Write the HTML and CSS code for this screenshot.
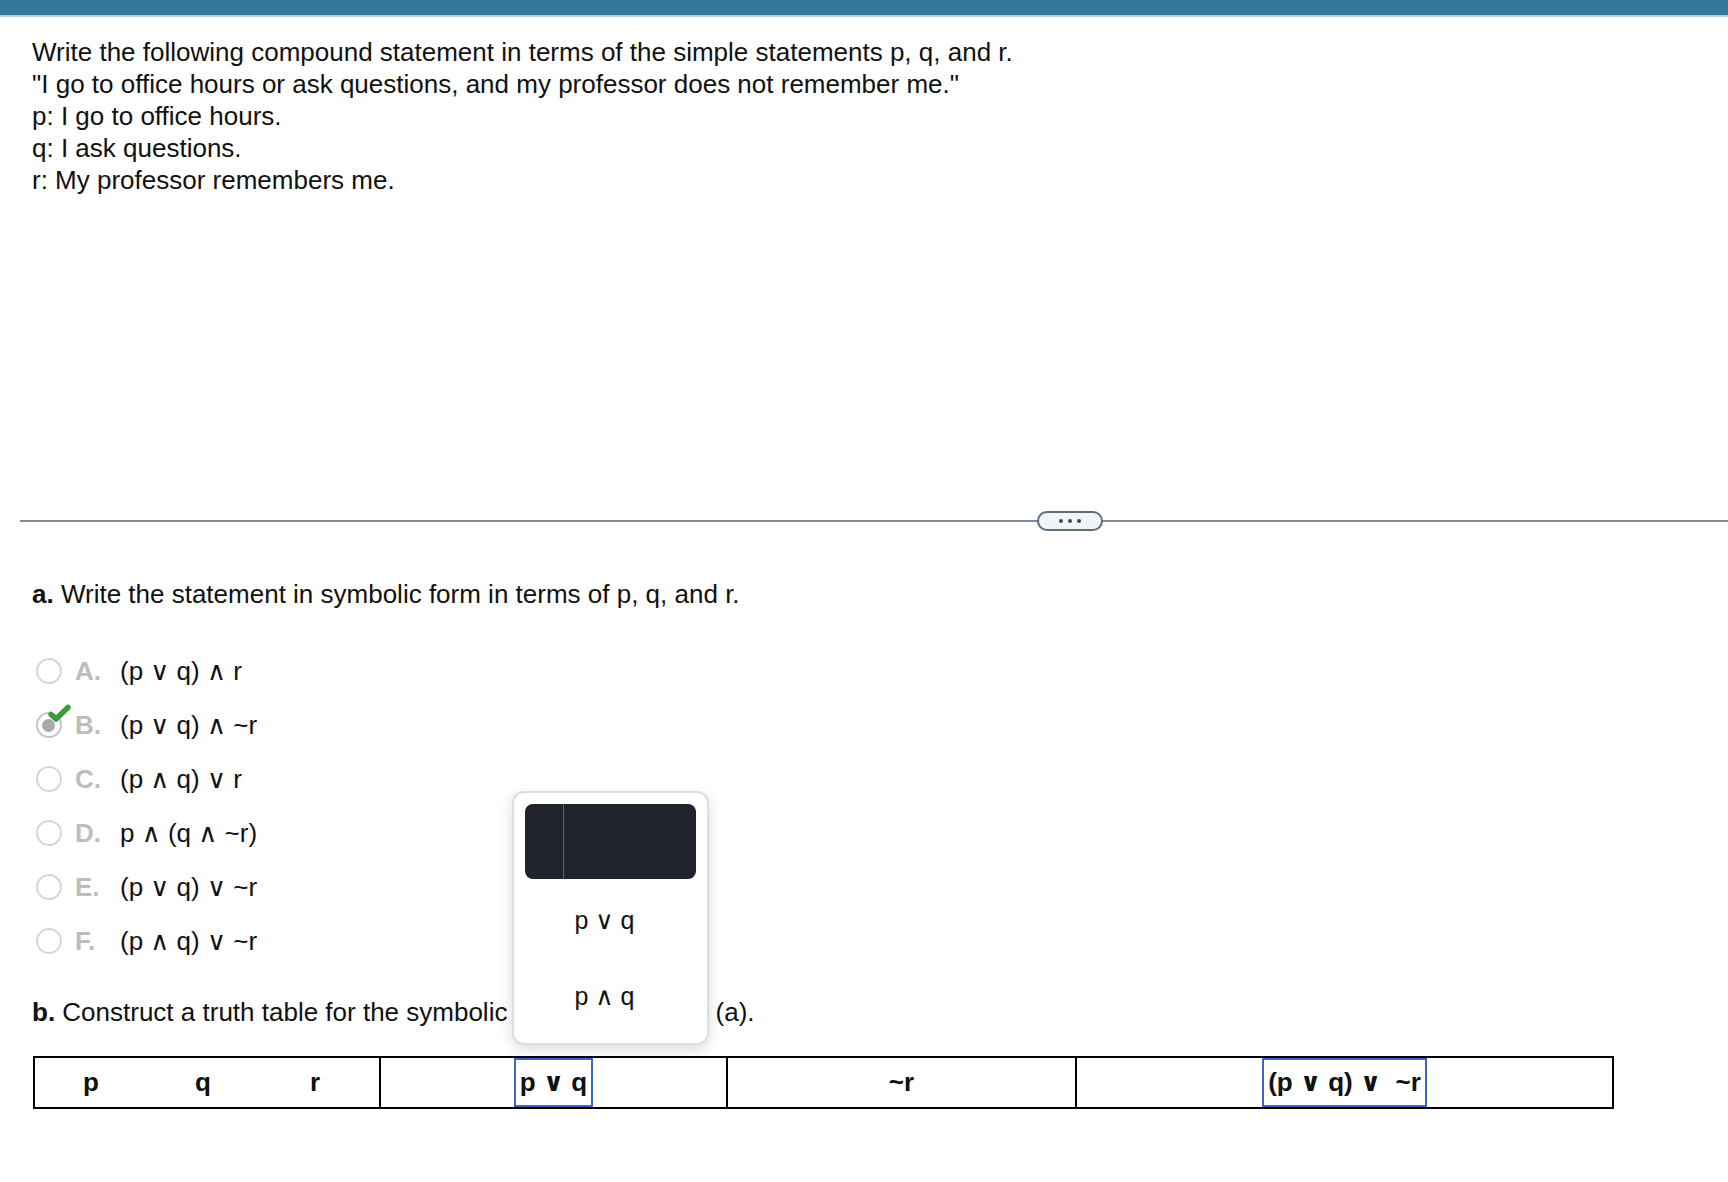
FILE: index.html
```html
<!DOCTYPE html>
<html lang="en">
<head>
<meta charset="utf-8">
<title>Truth table question</title>
<link rel="stylesheet" href="styles.css">
</head>
<body>
<div class="topbar"></div>
<div class="question">
  <div>Write the following compound statement in terms of the simple statements p, q, and r.</div>
  <div>"I go to office hours or ask questions, and my professor does not remember me."</div>
  <div>p: I go to office hours.</div>
  <div>q: I ask questions.</div>
  <div>r: My professor remembers me.</div>
</div>
<div class="divider"><span class="pill"><i></i><i></i><i></i></span></div>
<div class="part-a"><b>a.</b> Write the statement in symbolic form in terms of p, q, and r.</div>
<div class="options">
  <div class="opt"><span class="radio"></span><span class="letter">A.</span><span class="formula">(p ∨ q) ∧ r</span></div>
  <div class="opt"><span class="radio selected"><svg class="check" viewBox="0 0 24 19" width="24" height="19"><path d="M4 10.5 L9 15 L21 3.5" fill="none" stroke="#3f9a3b" stroke-width="5.5" stroke-linecap="round" stroke-linejoin="round"/></svg></span><span class="letter">B.</span><span class="formula">(p ∨ q) ∧ ~r</span></div>
  <div class="opt"><span class="radio"></span><span class="letter">C.</span><span class="formula">(p ∧ q) ∨ r</span></div>
  <div class="opt"><span class="radio"></span><span class="letter">D.</span><span class="formula">p ∧ (q ∧ ~r)</span></div>
  <div class="opt"><span class="radio"></span><span class="letter">E.</span><span class="formula">(p ∨ q) ∨ ~r</span></div>
  <div class="opt"><span class="radio"></span><span class="letter">F.</span><span class="formula">(p ∧ q) ∨ ~r</span></div>
</div>
<div class="part-b">
  <b>b.</b> Construct a truth table for the symbolic <span class="covered">statement in part</span> (a).
  <div class="popup">
    <div class="dark"><span class="dark-line"></span></div>
    <div class="item item1">p ∨ q</div>
    <div class="item item2">p ∧ q</div>
  </div>
</div>
<div class="truth">
  <div class="cell c1"><span>p</span><span>q</span><span>r</span></div>
  <div class="cell c2"><span class="box">p ∨ q</span></div>
  <div class="cell c3"><span>~r</span></div>
  <div class="cell c4"><span class="box">(p ∨ q) ∨&nbsp; ~r</span></div>
</div>
</body>
</html>
```
FILE: styles.css
```css
html, body {
  margin: 0;
  padding: 0;
  background: #ffffff;
}
body {
  font-family: "Liberation Sans", Arial, "DejaVu Sans", sans-serif;
  color: #111111;
  width: 1728px;
}
.topbar {
  height: 15px;
  background: #347899;
  border-bottom: 2px solid #b9cfe0;
}
.question {
  padding: 19px 0 0 32px;
  font-size: 26px;
  line-height: 32px;
}
.divider {
  margin: 324px 0 0 20px;
  height: 2px;
  background: #7e8b98;
  position: relative;
}
.pill {
  position: absolute;
  left: 1017px;
  top: -9px;
  width: 62px;
  height: 16px;
  border: 2px solid #5f6b79;
  border-radius: 10px;
  background: #f3f4f6;
  display: flex;
  align-items: center;
  justify-content: center;
  gap: 5px;
}
.pill i {
  width: 4px;
  height: 4px;
  border-radius: 50%;
  background: #3f4650;
}
.part-a {
  margin: 56px 0 0 32px;
  font-size: 26px;
  line-height: 32px;
}
.options {
  margin: 34px 0 0 36px;
}
.opt {
  height: 54px;
  display: flex;
  align-items: center;
  font-size: 26px;
}
.radio {
  width: 26px;
  height: 26px;
  border: 2px solid #d6d6d6;
  border-radius: 50%;
  box-sizing: border-box;
  position: relative;
  flex: none;
}
.radio.selected {
  border-color: #c4c4c4;
}
.radio.selected::after {
  content: "";
  position: absolute;
  left: 4px;
  top: 5px;
  width: 13px;
  height: 13px;
  border-radius: 50%;
  background: #a9a9a9;
}
.check {
  position: absolute;
  left: 9px;
  top: -10px;
  z-index: 2;
}
.letter {
  margin-left: 13px;
  width: 45px;
  font-weight: bold;
  color: #bdbdbd;
}
.formula {
  color: #111111;
}
.part-b {
  margin: 28px 0 0 32px;
  font-size: 26px;
  line-height: 32px;
  position: relative;
}
.covered {
  visibility: hidden;
}
.popup {
  position: absolute;
  left: 480px;
  top: -205px;
  width: 197px;
  height: 254px;
  box-sizing: border-box;
  border: 2px solid #dedede;
  border-radius: 12px;
  background: #ffffff;
  box-shadow: 0 4px 14px rgba(0, 0, 0, 0.14);
}
.dark {
  margin: 11px 0 0 11px;
  width: 171px;
  height: 75px;
  background: #20232c;
  border-radius: 8px;
  position: relative;
}
.dark-line {
  position: absolute;
  left: 38px;
  top: 0;
  bottom: 0;
  width: 1px;
  background: #5d6470;
}
.item {
  text-align: center;
  font-size: 25px;
  line-height: 32px;
  margin-left: -12px;
}
.item1 {
  margin-top: 25px;
}
.item2 {
  margin-top: 44px;
}
.truth {
  margin: 28px 0 0 33px;
  width: 1581px;
  height: 53px;
  box-sizing: border-box;
  border: 2px solid #000000;
  display: grid;
  grid-template-columns: 346px 347px 349px 1fr;
  font-weight: bold;
  font-size: 26px;
}
.cell {
  display: flex;
  align-items: center;
  justify-content: center;
  border-right: 2px solid #000000;
}
.cell.c1 {
  padding-right: 8px;
}
.cell.c4 {
  border-right: none;
}
.cell.c1 span {
  flex: 1;
  text-align: center;
}
.box {
  border: 2px solid #3b66c6;
  height: 49px;
  box-sizing: border-box;
  display: flex;
  align-items: center;
  padding: 0 4px;
}
```
